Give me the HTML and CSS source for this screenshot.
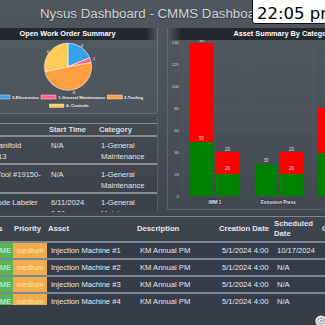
FILE: index.html
```html
<!DOCTYPE html>
<html lang="en">
<head>
<meta charset="utf-8">
<title>Nysus Dashboard - CMMS Dashboard</title>
<link rel="stylesheet" href="styles.css">
</head>
<body>
<div class="page">
  <header class="titlebar"><h1 class="title">Nysus Dashboard - CMMS Dashboard</h1></header>
  <div class="grid">
    <section class="panel pie-panel">
      <div class="phead">Open Work Order Summary</div>
      <svg class="pie" width="180" height="73" viewBox="0 0 180 73">
        <g stroke="#ffffff" stroke-width="0.6">
          <path d="M90 26.7 L90 3.2 A23.5 23.5 0 0 1 111.74 17.78 Z" fill="#36a2eb"/>
          <path d="M90 26.7 L111.74 17.78 A23.5 23.5 0 0 1 113.14 22.62 Z" fill="#ff6384"/>
          <path d="M90 26.7 L113.14 22.62 A23.5 23.5 0 0 1 67.01 31.59 Z" fill="#ff9f40"/>
          <path d="M90 26.7 L67.01 31.59 A23.5 23.5 0 0 1 90 3.2 Z" fill="#ffcd56"/>
        </g>
        <g class="pielbl">
          <text x="104" y="7.2">3</text>
          <text x="116" y="19.5">1</text>
          <text x="96" y="54.2">8</text>
          <text x="69.7" y="12.5">4</text>
        </g>
        <g class="legend">
          <rect x="15" y="55" width="17" height="4" fill="#36a2eb" stroke="#fff" stroke-width="0.4"/>
          <text x="34" y="58.6">3-Electronics</text>
          <rect x="63" y="55" width="15" height="4" fill="#ff6384" stroke="#fff" stroke-width="0.4"/>
          <text x="80.3" y="58.6">1-General Maintenance</text>
          <rect x="129.3" y="55" width="15" height="4" fill="#ff9f40" stroke="#fff" stroke-width="0.4"/>
          <text x="146" y="58.6">2-Tooling</text>
          <rect x="71.3" y="64" width="14.7" height="3.4" fill="#ffcd56" stroke="#fff" stroke-width="0.4"/>
          <text x="88" y="67.4">4- Controls</text>
        </g>
      </svg>
    </section>

    <section class="panel chart-panel">
      <div class="phead">Asset Summary By Category</div>
      <svg class="bars" width="232" height="169" viewBox="0 0 232 169">
        <g class="gridl" stroke="rgba(255,255,255,0.07)" stroke-width="0.6">
          <line x1="15" y1="2" x2="232" y2="2"/>
          <line x1="15" y1="24" x2="232" y2="24"/>
          <line x1="15" y1="46" x2="232" y2="46"/>
          <line x1="15" y1="68" x2="232" y2="68"/>
          <line x1="15" y1="90" x2="232" y2="90"/>
          <line x1="15" y1="112" x2="232" y2="112"/>
          <line x1="15" y1="134" x2="232" y2="134"/>
          <line x1="15" y1="156" x2="232" y2="156"/>
          <line x1="15" y1="2" x2="15" y2="156"/>
          <line x1="80" y1="2" x2="80" y2="156"/>
          <line x1="145" y1="2" x2="145" y2="156"/>
          <line x1="210" y1="2" x2="210" y2="156"/>
        </g>
        <g class="ylbl">
          <text x="11" y="3.5">140</text>
          <text x="11" y="25.5">120</text>
          <text x="11" y="47.5">100</text>
          <text x="11" y="69.5">80</text>
          <text x="11" y="91.5">60</text>
          <text x="11" y="113.5">40</text>
          <text x="11" y="135.5">20</text>
          <text x="11" y="157.5">0</text>
        </g>
        <g>
          <rect x="22" y="102" width="23" height="54" fill="#008000"/>
          <rect x="22" y="3" width="23" height="99" fill="#ff0000"/>
          <rect x="48" y="134" width="23" height="22" fill="#008000"/>
          <rect x="48" y="112" width="23" height="22" fill="#ff0000"/>
          <rect x="87" y="124" width="22" height="32" fill="#008000"/>
          <rect x="112" y="134" width="23" height="22" fill="#008000"/>
          <rect x="112" y="112" width="23" height="22" fill="#ff0000"/>
          <rect x="150" y="113" width="23" height="43" fill="#008000"/>
          <rect x="150" y="68" width="23" height="45" fill="#ff0000"/>
        </g>
        <g class="vlbl">
          <text x="33.5" y="2">90</text>
          <text x="33.5" y="99.8">50</text>
          <text x="59.5" y="110.5">20</text>
          <text x="59.5" y="129.5">20</text>
          <text x="98" y="121.5">30</text>
          <text x="123.5" y="110.5">20</text>
          <text x="123.5" y="129.5">20</text>
          <text x="161.5" y="66">40</text>
          <text x="161.5" y="110.5">40</text>
        </g>
        <g class="xlbl">
          <text x="47" y="163.6">IMM 1</text>
          <text x="110.3" y="163.6">Extrusion Press</text>
          <text x="177" y="163.6">Assembly</text>
        </g>
      </svg>
    </section>

    <section class="panel wo-panel">
      <table class="wo">
        <colgroup><col class="c1"><col class="c2"><col class="c3"></colgroup>
        <thead>
          <tr><th>Asset</th><th>Start Time</th><th>Category</th></tr>
        </thead>
        <tbody>
          <tr><td>Hot Manifold<br>Zone 13</td><td>N/A</td><td>1-General Maintenance</td></tr>
          <tr><td>Mold Tool #19150-<br>01</td><td>N/A</td><td>1-General Maintenance</td></tr>
          <tr><td>QR Code Labeler<br>Line 2</td><td>6/11/2024 0:51</td><td>1-General Maintenance</td></tr>
        </tbody>
      </table>
    </section>
  </div>

  <section class="pm-panel">
    <table class="pm">
      <colgroup>
        <col class="p1"><col class="p2"><col class="p3"><col class="p4"><col class="p5"><col class="p6"><col class="p7">
      </colgroup>
      <thead>
        <tr><th>Status</th><th>Priority</th><th>Asset</th><th>Description</th><th>Creation Date</th><th>Scheduled Date</th><th>Completion Date</th></tr>
      </thead>
      <tbody>
        <tr><td class="st">ON TIME</td><td class="pr">medium</td><td>Injection Machine #1</td><td>KM Annual PM</td><td>5/1/2024 4:00</td><td>10/17/2024</td><td>N/A</td></tr>
        <tr><td class="st">ON TIME</td><td class="pr">medium</td><td>Injection Machine #2</td><td>KM Annual PM</td><td>5/1/2024 4:00</td><td>N/A</td><td>N/A</td></tr>
        <tr><td class="st">ON TIME</td><td class="pr">medium</td><td>Injection Machine #3</td><td>KM Annual PM</td><td>5/1/2024 4:00</td><td>N/A</td><td>N/A</td></tr>
        <tr><td class="st">ON TIME</td><td class="pr">medium</td><td>Injection Machine #4</td><td>KM Annual PM</td><td>5/1/2024 4:00</td><td>N/A</td><td>N/A</td></tr>
      </tbody>
    </table>
  </section>
</div>

<div class="clock">22:05 pm</div>

<div class="fab">
  <svg width="12" height="12" viewBox="0 0 12 12">
    <circle cx="6" cy="6" r="5.6" fill="#e9eaec"/>
    <circle cx="6" cy="6" r="3" fill="none" stroke="#8a8f96" stroke-width="1.6" stroke-dasharray="1.2 0.9"/>
    <circle cx="6" cy="6" r="1.1" fill="#8a8f96"/>
  </svg>
</div>
</body>
</html>
```

FILE: styles.css
```css
* { box-sizing: border-box; }

html, body {
  margin: 0;
  padding: 0;
}

body {
  width: 325px;
  height: 325px;
  overflow: hidden;
  position: relative;
  background: linear-gradient(180deg, #50565e 0%, #4a5058 35%, #3d444e 70%, #353c46 100%);
  font-family: "Liberation Sans", Arial, sans-serif;
  color: #dde0e4;
}

.page {
  margin-left: -22px;
  width: 440px;
}

.titlebar {
  height: 28px;
}

.title {
  margin: 0;
  padding-left: 62px;
  font-size: 13.3px;
  font-weight: normal;
  line-height: 28px;
  color: #d0d4d9;
  white-space: nowrap;
  text-shadow: 0 1px 1px rgba(0, 0, 0, 0.35);
}

.clock {
  position: absolute;
  top: -1px;
  left: 252px;
  height: 24.5px;
  padding: 6px 4px 0 4px;
  background: #ffffff;
  border: 1px solid #111111;
  border-bottom-left-radius: 3px;
  font-family: "DejaVu Sans", sans-serif;
  font-size: 16.5px;
  line-height: 16.5px;
  color: #000000;
  white-space: nowrap;
}

.grid {
  display: grid;
  grid-template-columns: 180px 232px;
  grid-template-rows: 86px 95px;
  column-gap: 9px;
  row-gap: 3px;
}

.panel {
  overflow: hidden;
}

.phead {
  height: 12px;
  line-height: 12px;
  font-size: 7.3px;
  font-weight: bold;
  color: #ffffff;
  text-align: center;
  white-space: nowrap;
  background: linear-gradient(90deg, #50565d 0%, #23282e 6%, #23282e 94%, #50565d 100%);
}

.pie-panel {
  grid-column: 1;
  grid-row: 1;
  background: rgba(255, 255, 255, 0.025);
  border-right: 1px solid rgba(255, 255, 255, 0.16);
  border-bottom: 1px solid rgba(255, 255, 255, 0.16);
  border-bottom-right-radius: 4px;
}

.pie, .bars {
  display: block;
}

.pielbl text {
  font-family: "Liberation Sans", Arial, sans-serif;
  font-size: 4.4px;
  fill: #f2f2f2;
  text-anchor: middle;
}

.legend text {
  font-family: "Liberation Sans", Arial, sans-serif;
  font-size: 4.3px;
  font-weight: bold;
  fill: #eeeeee;
}

.chart-panel {
  grid-column: 2;
  grid-row: 1 / span 2;
  height: 182px;
  background: rgba(255, 255, 255, 0.015);
  border-left: 1px solid rgba(255, 255, 255, 0.12);
  border-bottom: 1px solid rgba(255, 255, 255, 0.14);
}

.ylbl text {
  font-family: "Liberation Sans", Arial, sans-serif;
  font-size: 4.3px;
  fill: #cfd2d6;
  text-anchor: end;
}

.vlbl text {
  font-family: "Liberation Sans", Arial, sans-serif;
  font-size: 4.6px;
  fill: #f0f0f0;
  text-anchor: middle;
  paint-order: stroke;
  stroke: rgba(0, 0, 0, 0.35);
  stroke-width: 0.6px;
}

.xlbl text {
  font-family: "Liberation Sans", Arial, sans-serif;
  font-size: 4.6px;
  font-weight: bold;
  fill: #e6e8ea;
  text-anchor: middle;
  paint-order: stroke;
  stroke: rgba(0, 0, 0, 0.45);
  stroke-width: 0.8px;
}

.wo-panel {
  grid-column: 1;
  grid-row: 2;
  padding-top: 6px;
  background: rgba(0, 0, 0, 0.06);
  border-right: 1px solid rgba(255, 255, 255, 0.14);
}

.wo {
  width: 179px;
  border-collapse: collapse;
  table-layout: fixed;
  font-size: 7.6px;
  line-height: 11px;
  color: #e2e4e7;
}

.wo .c1 { width: 69.5px; }
.wo .c2 { width: 50px; }
.wo .c3 { width: 59.5px; }

.wo th {
  height: 12px;
  padding: 0 1.5px;
  text-align: left;
  font-weight: bold;
  line-height: 9px;
  color: #dcdfe3;
  border-top: 1px solid #858c94;
  border-bottom: 2px solid #858c94;
  white-space: nowrap;
  overflow: hidden;
}

.wo td {
  padding: 3.5px 3px 1px 3.5px;
  vertical-align: top;
  border-bottom: 2px solid #858c94;
  white-space: nowrap;
}

.wo td:last-child,
.wo td:nth-child(2) {
  white-space: normal;
}

.wo td:first-child {
  padding-left: 0.5px;
}

.wo th:first-child {
  padding-left: 0.5px;
}

.pm-panel {
  margin-top: 4px;
  height: 89px;
  overflow: hidden;
  border-top: 1px solid #7f868f;
}

.pm {
  width: 423px;
  border-collapse: collapse;
  table-layout: fixed;
  font-size: 7.6px;
  color: #e8eaed;
}

.pm .p1 { width: 35px; }
.pm .p2 { width: 34px; }
.pm .p3 { width: 89px; }
.pm .p4 { width: 82px; }
.pm .p5 { width: 55px; }
.pm .p6 { width: 48px; }
.pm .p7 { width: 80px; }

.pm th {
  height: 25px;
  padding: 0 1px;
  text-align: left;
  font-size: 7.7px;
  font-weight: bold;
  line-height: 10.5px;
  color: #e4e6ea;
  border-bottom: 2px solid #7f868f;
  overflow: hidden;
}

.pm td {
  height: 17px;
  padding: 0 0 0 4px;
  line-height: 15px;
  background: #333c49;
  border-bottom: 2px solid #7f868f;
  white-space: nowrap;
  overflow: hidden;
}

.pm td.st {
  padding: 0;
  text-align: center;
  background: #54b456;
  color: #e2f3de;
}

.pm td.pr {
  padding: 0;
  text-align: center;
  background: #f1ac4e;
  color: #fde6b6;
}

.fab {
  position: absolute;
  left: 315px;
  top: 315px;
  width: 12px;
  height: 12px;
}

.fab svg {
  display: block;
}
```
